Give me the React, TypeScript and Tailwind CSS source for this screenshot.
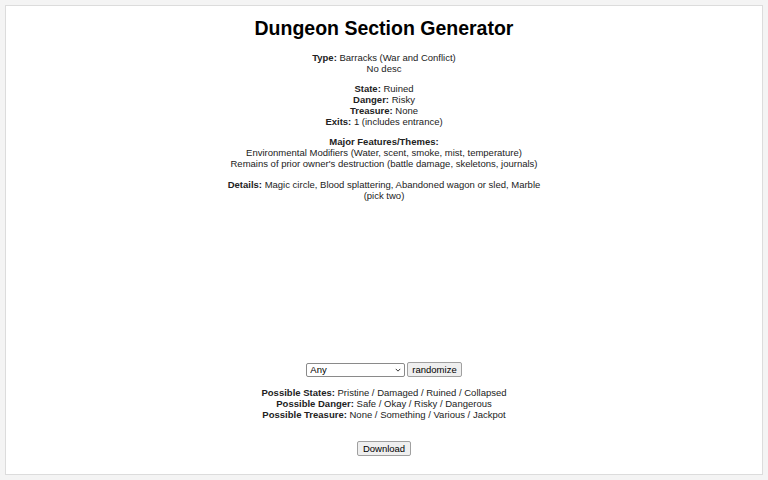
import React from "react";

const STATES = ["Pristine", "Damaged", "Ruined", "Collapsed"];
const DANGERS = ["Safe", "Okay", "Risky", "Dangerous"];
const TREASURES = ["None", "Something", "Various", "Jackpot"];

const Field = ({ label, children }: { label: string; children: React.ReactNode }) => (
    <div>
        <b>{label}:</b> {children}
    </div>
);

export default function App() {
    const [filter, setFilter] = React.useState("Any");

    return (
        <div className="min-h-screen bg-[#f4f4f4] p-[5px] font-['Liberation_Sans',Arial,sans-serif] text-[9.5px] leading-[11px] text-[#222]">
            <div className="flex h-[470px] flex-col items-center border border-[#dcdcdc] bg-white text-center">
                <h1 className="mt-[10px] text-[19.5px] leading-[24px] font-bold text-black">Dungeon Section Generator</h1>

                <div className="mt-[12px] flex w-full flex-col items-center">
                    <div>
                        <Field label="Type">Barracks (War and Conflict)</Field>
                        <div>No desc</div>
                    </div>
                    <div className="mt-[9px]">
                        <Field label="State">Ruined</Field>
                        <Field label="Danger">Risky</Field>
                        <Field label="Treasure">None</Field>
                        <Field label="Exits">1 (includes entrance)</Field>
                    </div>
                    <div className="mt-[9px]">
                        <b>Major Features/Themes:</b>
                        <div>Environmental Modifiers (Water, scent, smoke, mist, temperature)</div>
                        <div>Remains of prior owner's destruction (battle damage, skeletons, journals)</div>
                    </div>
                    <div className="mt-[10px] w-[318px]">
                        <b>Details:</b> Magic circle, Blood splattering, Abandoned wagon or sled, Marble (pick two)
                    </div>
                </div>

                <div className="h-[161px] w-full" />

                <div className="flex items-center gap-[2px]">
                    <div className="relative">
                        <select
                            value={filter}
                            onChange={(e) => setFilter(e.target.value)}
                            className="block h-[14px] w-[99px] appearance-none rounded-[2px] border border-[#8a8a8a] bg-white pl-[3px] text-left text-[9.5px] leading-[12px] text-black"
                        >
                            <option>Any</option>
                            <option>Barracks</option>
                            <option>Crypt</option>
                            <option>Library</option>
                        </select>
                        <svg
                            viewBox="0 0 8 5"
                            className="pointer-events-none absolute top-[5px] right-[4px] h-[4px] w-[6px]"
                            fill="none"
                            stroke="#333"
                            strokeWidth="1.3"
                        >
                            <path d="M1 1l3 3 3-3" />
                        </svg>
                    </div>
                    <button className="h-[15px] rounded-[2px] border border-[#a0a0a0] bg-[#efefef] px-[4px] text-[9.5px] leading-[12px] text-black">
                        randomize
                    </button>
                </div>

                <div className="mt-[10px]">
                    <Field label="Possible States">{STATES.join(" / ")}</Field>
                    <Field label="Possible Danger">{DANGERS.join(" / ")}</Field>
                    <Field label="Possible Treasure">{TREASURES.join(" / ")}</Field>
                </div>

                <button className="mt-[21px] h-[15px] rounded-[2px] border border-[#a0a0a0] bg-[#efefef] px-[5px] text-[9.5px] leading-[12px] text-black">
                    Download
                </button>
            </div>
        </div>
    );
}
